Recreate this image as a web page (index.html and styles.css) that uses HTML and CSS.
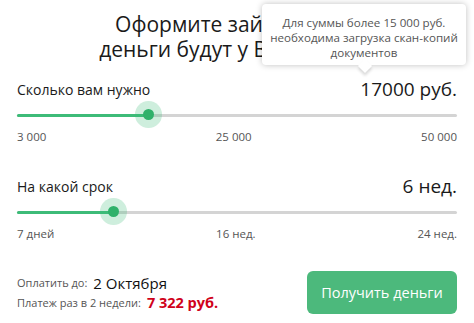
FILE: index.html
```html
<!DOCTYPE html>
<html lang="ru">
<head>
    <meta charset="UTF-8">
    <meta name="viewport" content="width=device-width, initial-scale=1.0">
    <title>Займ онлайн</title>
    <link rel="stylesheet" href="styles.css">
</head>
<body>
    <div class="calc">
        <h1 class="title">Оформите займ сейчас,<br>деньги будут у Вас сегодня</h1>

        <!-- Подсказка над суммой -->
        <div class="tip">Для суммы более 15 000 руб.<br>необходима загрузка скан-копий<br>документов</div>

        <div class="row">
            <span class="label">Сколько вам нужно</span>
            <span class="value">17000 руб.</span>
        </div>
        <div class="slider">
            <div class="fill" style="width: 29.8%"></div>
            <div class="thumb" style="left: 29.8%"></div>
        </div>
        <div class="scale">
            <span>3 000</span>
            <span>25 000</span>
            <span>50 000</span>
        </div>

        <div class="row row-term">
            <span class="label">На какой срок</span>
            <span class="value">6 нед.</span>
        </div>
        <div class="slider">
            <div class="fill" style="width: 21.8%"></div>
            <div class="thumb" style="left: 21.8%"></div>
        </div>
        <div class="scale">
            <span>7 дней</span>
            <span>16 нед.</span>
            <span>24 нед.</span>
        </div>

        <div class="bottom">
            <div class="summary">
                <div class="line"><span class="muted">Оплатить до:</span> <span class="date">2 Октября</span></div>
                <div class="line"><span class="muted">Платеж раз в 2 недели:</span> <span class="sum">7 322 руб.</span></div>
            </div>
            <button type="button" class="btn">Получить деньги</button>
        </div>
    </div>
</body>
</html>
```

FILE: styles.css
```css
body {
    margin: 0;
    padding: 0;
    background-color: #fff;
    color: #1a1a1a;
    font-family: 'Open Sans', 'Noto Sans', sans-serif;
}

.calc {
    position: relative;
    padding: 12px 17px 0 17px;
}

.title {
    margin: 0;
    font-size: 21px;
    font-weight: 400;
    line-height: 25px;
    text-align: center;
    color: #1a1a1a;
}

.tip {
    position: absolute;
    top: 4px;
    left: 262px;
    width: 204px;
    padding: 11px 0 5px 0;
    background-color: #fff;
    border-radius: 4px;
    box-shadow: 0 0 6px rgba(0, 0, 0, 0.25);
    font-size: 11.6px;
    line-height: 15px;
    text-align: center;
    color: #555;
}

.tip::after {
    content: "";
    position: absolute;
    left: 98px;
    bottom: -6px;
    width: 10px;
    height: 10px;
    background-color: #fff;
    transform: rotate(45deg);
    box-shadow: 2px 2px 3px rgba(0, 0, 0, 0.15);
}

.row {
    display: flex;
    justify-content: space-between;
    align-items: center;
    margin-top: 13px;
    height: 28px;
}

.row-term {
    margin-top: 28px;
}

.label {
    font-size: 14px;
}

.value {
    font-size: 19px;
}

.slider {
    position: relative;
    height: 3px;
    margin-top: 11px;
    background-color: #d4d4d4;
    border-radius: 2px;
}

.fill {
    height: 100%;
    background-color: #3dbb78;
    border-radius: 2px;
}

.thumb {
    position: absolute;
    top: 1px;
    width: 11px;
    height: 11px;
    margin: -6px 0 0 -5px;
    background-color: #2fb16a;
    border-radius: 50%;
    box-shadow: 0 0 0 8px rgba(61, 187, 120, 0.25);
}

.scale {
    display: flex;
    justify-content: space-between;
    margin-top: 12px;
    font-size: 11.5px;
    line-height: 15px;
    color: #555;
}

.bottom {
    display: flex;
    justify-content: space-between;
    align-items: center;
    margin-top: 30px;
}

.line {
    height: 18px;
    display: flex;
    align-items: center;
    gap: 6px;
}

.line + .line {
    margin-top: 2px;
}

.muted {
    font-size: 11px;
    color: #555;
}

.date {
    font-size: 15px;
    color: #111;
}

.sum {
    font-size: 14.5px;
    font-weight: 700;
    color: #d0021b;
}

.btn {
    width: 150px;
    height: 43px;
    padding: 0;
    border: none;
    border-radius: 6px;
    background-color: #4cb97c;
    color: #fff;
    font-family: 'Open Sans', 'Noto Sans', sans-serif;
    font-size: 14.5px;
    cursor: pointer;
}
```
